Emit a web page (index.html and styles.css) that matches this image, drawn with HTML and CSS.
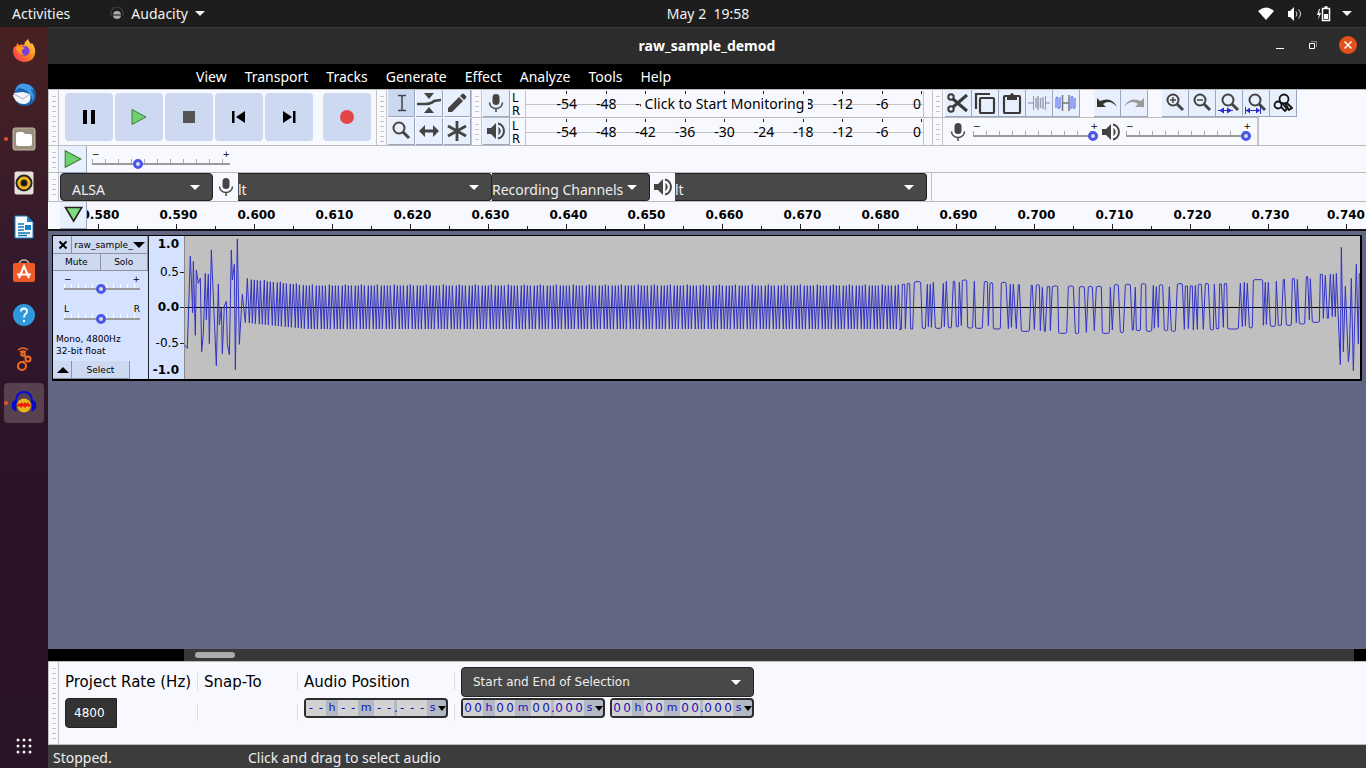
FILE: index.html
```
<!DOCTYPE html>
<html lang="en">
<head>
  <meta charset="UTF-8">
  <meta name="viewport" content="width=device-width, initial-scale=1.0">
  <title>raw_sample_demod</title>
  <link rel="stylesheet" href="styles.css">
</head>
<body>
  <svg class="defs" width="0" height="0" aria-hidden="true">
    <symbol id="mic" viewBox="0 0 20 20"><rect x="6.5" y="1" width="7" height="11" rx="3.5" fill="#444"/><path d="M3.5 9.5a6.5 6 0 0 0 13 0M10 15.5V19" fill="none" stroke="#444" stroke-width="1.5"/></symbol>
    <symbol id="speaker" viewBox="0 0 20 20"><path d="M1 7h4l5-5v16l-5-5H1z" fill="#444"/><path d="M12.500 6.500a4.500 4.500 0 0 1 0 7" fill="#444" stroke="#444"/><path d="M12 2.500a7.700 7.700 0 0 1 0 15" fill="none" stroke="#444" stroke-width="2"/></symbol>
    <symbol id="lens" viewBox="0 0 20 20"><circle cx="8" cy="7" r="5.500" fill="none" stroke="#444" stroke-width="2"/><path d="M12 11l6 6" stroke="#444" stroke-width="3"/></symbol>
    <symbol id="play" viewBox="0 0 16 18"><path d="M1 1.500L15 9 1 16.500z" fill="#6fd06f" stroke="#3b7d3b"/></symbol>
  </svg>

  <header class="topbar">
    <div class="topbar-left">
      <button>Activities</button>
      <button class="app-menu">
        <svg width="14" height="14" viewBox="0 0 14 14"><path d="M1 9V6a6 6 0 0 1 12 0v3" fill="none" stroke="#3a3a3a" stroke-width="1.500"/><circle cx="7" cy="8" r="4" fill="#aaa"/><path d="M3 8h8" stroke="#444" stroke-width="1.500"/></svg>
        Audacity <span class="caret"></span>
      </button>
    </div>
    <button class="clock">May 2&nbsp; 19:58</button>
    <div class="tray">
      <svg width="16" height="14" viewBox="0 0 16 14"><path d="M0 4Q8-3 16 4L8 13z" fill="#fff"/></svg>
      <svg width="16" height="14" viewBox="0 0 16 14"><path d="M1 4h2l4-4v14L3 10H1z" fill="#fff"/><path d="M9 4.500q2 2.500 0 5M11.500 2.500q4 4.500 0 9" fill="none" stroke="#ddd"/></svg>
      <svg width="16" height="16" viewBox="0 0 16 16"><path d="M3 3L1 9h2l-1 5 3-7H3l1-4z" fill="#fff"/><path d="M6.500 2.500h7v12h-7zM8.500 1h3" fill="none" stroke="#fff" stroke-width="1.500"/><path d="M8 8h4v5H8z" fill="#fff"/></svg>
      <span class="caret"></span>
    </div>
  </header>

  <div class="desktop">
    <nav class="dock">
      <a href="#" title="Firefox"><svg viewBox="0 0 24 24"><defs><linearGradient id="fx" x1="1" y1="0" x2="0" y2="1"><stop offset="0" stop-color="#ffec4a"/><stop offset=".45" stop-color="#ff8a1f"/><stop offset="1" stop-color="#f0255f"/></linearGradient></defs><path d="M5 4l2 2q3-1 5 0 1-4 4-6 1 3 3 5l1-1q4 5 3 11-2 8-11 8Q2 22 1 13 1 9 3 7l1 1z" fill="url(#fx)"/><circle cx="12.500" cy="12" r="5" fill="#7a3fd8"/><path d="M3 8q5-1 8 0l2 1-3 2q-1 4 3 5-4 1-7-3" fill="#ff9a22"/></svg></a>
      <a href="#" title="Thunderbird"><svg viewBox="0 0 24 24"><circle cx="13" cy="12" r="11" fill="#1c62ae"/><path d="M8 1q9-2 14 6l-4-1q5 5 3 12-3-12-14-13L3 8q1-5 5-7z" fill="#3f9be8"/><path d="M2 10l9-1 7 2q2 9-5 10-8 1-12-8z" fill="#f4f5fa"/><path d="M2 11l9 5 7-5" fill="none" stroke="#aab" stroke-width="1"/></svg></a>
      <a href="#" title="Files" class="running"><svg viewBox="0 0 24 24"><rect x="1" y="1" width="22" height="22" rx="2" fill="#9b917f" stroke="#c3b9a7"/><path d="M4 7q0-2 2-2h5l2 2h5q2 0 2 2v8q0 2-2 2H6q-2 0-2-2z" fill="#fff"/></svg></a>
      <a href="#" title="Rhythmbox"><svg viewBox="0 0 24 24"><rect x="2.500" y=".5" width="19" height="23" rx="2" fill="#e6e0d6"/><circle cx="12" cy="12" r="8.500" fill="#262626"/><circle cx="12" cy="12" r="5" fill="none" stroke="#f3b519" stroke-width="3"/><circle cx="12" cy="12" r="2" fill="#111"/></svg></a>
      <a href="#" title="LibreOffice Writer"><svg viewBox="0 0 24 24"><path d="M3 1h12l6 6v16H3z" fill="#f7fbff" stroke="#1382c4"/><path d="M15 1l6 6h-6z" fill="#1382c4"/><path d="M6 9h6M6 12h6M6 15h6M6 18h12M6 20.500h9" stroke="#1276b5" stroke-width="1.300"/><rect x="13" y="10" width="6" height="5" fill="#1382c4"/></svg></a>
      <a href="#" title="Ubuntu Software"><svg viewBox="0 0 24 24"><path d="M7 5q1-4 5-4t5 4" fill="none" stroke="#c9b9ab" stroke-width="1.500"/><rect x="1" y="4" width="22" height="19" rx="2" fill="#ee5a28"/><path d="M7 19l5-12 5 12M5 15.500h14" fill="none" stroke="#fff" stroke-width="2"/></svg></a>
      <a href="#" title="Help"><svg viewBox="0 0 24 24"><circle cx="12" cy="12" r="11" fill="#2f97dc"/><path d="M9 8.500q0-3 3-3t3 3q0 1.500-1.500 2.500T12 14.500" fill="none" stroke="#fff" stroke-width="1.800"/><circle cx="12" cy="18" r="1.200" fill="#fff"/></svg></a>
      <a href="#" title="Gqrx"><svg viewBox="0 0 24 24" fill="none" stroke="#f36b1c" stroke-width="2"><circle cx="10" cy="19" r="4"/><circle cx="16" cy="12" r="2.500"/><circle cx="11" cy="7" r="1.700"/><path d="M12 14l-1 2M14 10l-2-2"/><path d="M6 3q5-4 10 0M8 5q3-2 6 0" stroke-width="1.300"/></svg></a>
      <a href="#" title="Audacity" class="running active"><svg viewBox="0 0 24 24"><path d="M4 12V9q1-8 8-8t8 8v3" fill="none" stroke="#0707e0" stroke-width="2"/><ellipse cx="12" cy="14.500" rx="7" ry="7" fill="#e8b51c"/><path d="M5 14l2-2 1 1 2-2 1 2 2-2 1 2 2-2 1 2 2 1-2 2-2-1-2 2-2-2-2 2-2-2-2 1z" fill="#f21a10"/><path d="M4 9q-4 1-4 5.500T4 20q-1.500-5.500 0-11zM20 9q4 1 4 5.500T20 20q1.500-5.500 0-11z" fill="#0808cf" stroke="#0808cf"/></svg></a>
      <a href="#" title="Show Applications" class="apps"><svg viewBox="0 0 24 24" fill="none" stroke="#eee" stroke-width="3" stroke-linecap="round" stroke-dasharray="0 6"><path d="M6 6h13M6 12h13M6 18h13"/></svg></a>
    </nav>

    <main class="window">
      <div class="titlebar">
        <h1>raw_sample_demod</h1>
        <div class="window-buttons">
          <button aria-label="Minimize"><svg width="10" height="10" viewBox="0 0 10 10"><path d="M1 8.500h8" stroke="#fff"/></svg></button>
          <button aria-label="Restore"><svg width="10" height="10" viewBox="0 0 10 10" fill="none"><path d="M3 1.500h5.500V7" stroke="#888"/><path d="M1.500 3.500h5v5h-5z" stroke="#fff"/></svg></button>
          <button aria-label="Close" class="close"><svg width="10" height="10" viewBox="0 0 10 10"><path d="M1.500 1.500l7 7M8.500 1.500l-7 7" stroke="#fff" stroke-width="1.500"/></svg></button>
        </div>
      </div>

      <nav class="menubar">
        <button>View</button><button>Transport</button><button>Tracks</button><button>Generate</button><button>Effect</button><button>Analyze</button><button>Tools</button><button>Help</button>
      </nav>

      <section class="toolbars">
        <div class="toolbar transport">
          <span class="grip"></span>
          <button aria-label="Pause"><svg width="14" height="14" viewBox="0 0 14 14"><path d="M1 0h4v14H1zM9 0h4v14H9z"/></svg></button>
          <button aria-label="Play"><svg width="16" height="18"><use href="#play"/></svg></button>
          <button aria-label="Stop"><svg width="12" height="12"><rect width="12" height="12" fill="#555"/></svg></button>
          <button aria-label="Skip to Start"><svg width="14" height="12" viewBox="0 0 14 12"><path d="M0 0h2.500v12H0zM13 0v12L4 6z"/></svg></button>
          <button aria-label="Skip to End"><svg width="14" height="12" viewBox="0 0 14 12"><path d="M11 0h2.500v12H11zM1 0v12l9-6z"/></svg></button>
          <button aria-label="Record" class="record"><svg width="14" height="14"><circle cx="7" cy="7" r="7" fill="#e24646"/></svg></button>
        </div>

        <div class="toolbar tools">
          <span class="grip"></span>
          <div class="tool-grid">
            <button class="tool pressed" aria-label="Selection Tool"><svg viewBox="0 0 20 20" fill="none" stroke="#444" stroke-width="1.500"><path d="M7 2.500h3l1 1 1-1h3M7 17.500h3l1-1 1 1h3M11 3.500v13"/></svg></button>
            <button class="tool" aria-label="Envelope Tool"><svg class="wide" viewBox="0 0 24 20"><path d="M7 0h10l-5 6zM7 20h10l-5-6z" fill="#444"/><path d="M0 11h8q6 0 9-3l7-1" fill="none" stroke="#444" stroke-width="2.500"/></svg></button>
            <button class="tool" aria-label="Draw Tool"><svg viewBox="0 0 20 20"><path d="M1 19v-4L12 4l4 4L5 19zM13 3l2-2q1-1 2 0l2 2q1 1 0 2l-2 2z" fill="#444"/></svg></button>
            <button class="tool" aria-label="Zoom Tool"><svg><use href="#lens"/></svg></button>
            <button class="tool" aria-label="Time Shift Tool"><svg viewBox="0 0 20 20"><path d="M0 10l6-6v4.500h8V4l6 6-6 6v-4.500H6V16z" fill="#444"/></svg></button>
            <button class="tool" aria-label="Multi-Tool"><svg viewBox="0 0 20 20"><path d="M10 0v20M1 5l18 10M19 5L1 15" stroke="#444" stroke-width="2.800"/></svg></button>
          </div>
        </div>

        <div class="stack meters">
          <div class="toolbar">
            <span class="grip"></span>
            <button class="tool" aria-label="Record Meter"><svg><use href="#mic"/></svg></button>
            <div class="channels"><span>L</span><span>R</span></div>
            <div class="scale"><span>-54</span><span>-48</span><span>-42</span><span></span><span></span><span></span><span>-18</span><span>-12</span><span>-6</span><span class="zero">0</span>
              <button class="monitor">Click to Start Monitoring</button>
            </div>
          </div>
          <div class="toolbar">
            <span class="grip"></span>
            <button class="tool" aria-label="Playback Meter"><svg><use href="#speaker"/></svg></button>
            <div class="channels"><span>L</span><span>R</span></div>
            <div class="scale"><span>-54</span><span>-48</span><span>-42</span><span>-36</span><span>-30</span><span>-24</span><span>-18</span><span>-12</span><span>-6</span><span class="zero">0</span></div>
          </div>
        </div>

        <div class="stack side">
          <div class="toolbar edit">
            <span class="grip"></span>
            <button class="tool" aria-label="Cut"><svg class="big" viewBox="0 0 22 22" fill="none" stroke="#3a3a3a" stroke-width="2"><circle cx="4" cy="5" r="2.700"/><circle cx="4" cy="17" r="2.700"/><path d="M6 7l14 12M6 15L20 3" stroke-width="3"/></svg></button>
            <button class="tool" aria-label="Copy"><svg class="big" viewBox="0 0 22 22" fill="none" stroke="#3a3a3a" stroke-width="2.200"><path d="M2 17V2h14"/><rect x="6" y="6" width="14" height="15" rx="1"/></svg></button>
            <button class="tool" aria-label="Paste"><svg class="big" viewBox="0 0 22 22"><rect x="3" y="4" width="16" height="17" rx="1" fill="none" stroke="#3a3a3a" stroke-width="2.200"/><path d="M6 3h3q2-4 4 0h3v5H6z" fill="#3a3a3a"/></svg></button>
            <button class="tool" aria-label="Trim"><svg class="big" viewBox="0 0 22 22" fill="none"><path d="M0 11h5M18 11h4" stroke="#a0a6cf" stroke-width="1.500"/><path d="M5.500 4v14M17.500 4v14" stroke="#999"/><path d="M8 6v10M10 4v14M12.500 6v10M15 5v12" stroke="#989cae" stroke-width="1.500"/></svg></button>
            <button class="tool" aria-label="Silence"><svg class="big" viewBox="0 0 22 22" fill="none"><path d="M1 16V7q1-4 2 0v8q1 3 2 0V5M16 17V6q1-3 2 0v9q1 3 2 0V6" stroke="#7a8cf0" stroke-width="1.500"/><path d="M7.500 3v16M14 3v16M8 11h6" stroke="#777" stroke-width="1.500"/></svg></button>
            <span class="gap"></span>
            <button class="tool" aria-label="Undo"><svg class="big" viewBox="0 0 22 22"><path d="M1 6v9h9l-3-3q7-5 14 3Q16 4 4 9z" fill="#333"/></svg></button>
            <button class="tool" aria-label="Redo"><svg class="big" viewBox="0 0 22 22"><path d="M21 6v9h-9l3-3q-7-5-14 3Q6 4 18 9z" fill="#999"/></svg></button>
            <span class="gap"></span>
            <button class="tool" aria-label="Zoom In"><svg><use href="#lens"/><path d="M5 7h6M8 4v6" stroke="#444" stroke-width="1.500"/></svg></button>
            <button class="tool" aria-label="Zoom Out"><svg><use href="#lens"/><path d="M5 7h6" stroke="#444" stroke-width="1.500"/></svg></button>
            <button class="tool" aria-label="Fit Selection"><svg class="big" viewBox="0 0 22 22"><use href="#lens" x="2" y="1" width="20" height="20"/><path d="M0 18.500h15" stroke="#2b2bc9"/><path d="M1 18.500l5-3v6zM14 18.500l-5-3v6z" fill="#2b2bc9"/></svg></button>
            <button class="tool" aria-label="Fit Project"><svg class="big" viewBox="0 0 22 22"><use href="#lens" x="2" y="1" width="20" height="20"/><path d="M.5 15v7M15.500 15v7M1 18.500h14" stroke="#2b2bc9"/><path d="M1 18.500l4-3v6zM15 18.500l-4-3v6z" fill="#2b2bc9"/></svg></button>
            <button class="tool" aria-label="Zoom Toggle"><svg viewBox="0 0 20 20" fill="none" stroke="#111" stroke-width="1.800"><circle cx="11" cy="6" r="4.500"/><path d="M14 10l5 5-3 2-4-7"/><circle cx="5" cy="12" r="3.500"/><path d="M8 14l4 4 2-2-5-6"/></svg></button>
          </div>
          <div class="toolbar mixer">
            <span class="grip"></span>
            <svg width="20" height="20"><use href="#mic"/></svg>
            <label class="slider"><span class="ends"><span>−</span><span>+</span></span><input type="range" value="100" aria-label="Recording volume"></label>
            <svg width="20" height="20"><use href="#speaker"/></svg>
            <label class="slider"><span class="ends"><span>−</span><span>+</span></span><input type="range" value="100" aria-label="Playback volume"></label>
          </div>
        </div>
      </section>

      <section class="toolbar speed">
        <span class="grip"></span>
        <button class="tool" aria-label="Play at Speed"><svg width="16" height="18"><use href="#play"/></svg></button>
        <label class="slider"><span class="ends"><span>−</span><span>+</span></span><input type="range" value="32" aria-label="Playback speed"></label>
      </section>

      <section class="toolbar devices">
        <span class="grip"></span>
        <div class="drop host"><select aria-label="Audio host"><option>ALSA</option></select></div>
        <svg width="20" height="20"><use href="#mic"/></svg>
        <div class="drop cut input"><select aria-label="Recording device"><option>lt</option></select></div>
        <div class="drop cut count"><select aria-label="Recording channels"><option>Recording Channels</option></select></div>
        <svg width="20" height="20"><use href="#speaker"/></svg>
        <div class="drop cut output"><select aria-label="Playback device"><option>lt</option></select></div>
        <span class="toolbar-end"></span>
      </section>

      <section class="timeline">
        <button class="tool" aria-label="Pinned play head"><svg width="16" height="16" viewBox="0 0 16 16"><path d="M2 2h13L8.500 13z" fill="#7fdc7f" stroke="#222" stroke-width="1.300"/></svg></button>
        <div class="ruler"><div class="ruler-labels" id="ruler"></div></div>
      </section>

      <section class="tracks">
        <article class="track">
          <div class="panel">
            <div class="panel-row"><button class="small" aria-label="Close track"><svg width="10" height="10" viewBox="0 0 10 10"><path d="M1.500 1.500l7 7M8.500 1.500l-7 7" stroke="#000" stroke-width="2"/></svg></button><button class="name">raw_sample_<span class="down"></span></button></div>
            <div class="panel-row halves"><button>Mute</button><button>Solo</button></div>
            <label class="slider"><span class="ends"><span>−</span><span>+</span></span><input type="range" value="49" aria-label="Gain"></label>
            <label class="slider"><span class="ends"><span>L</span><span>R</span></span><input type="range" value="49" aria-label="Pan"></label>
            <p>Mono, 4800Hz<br>32-bit float</p>
            <div class="panel-row bottom"><button class="small" aria-label="Collapse"><span class="up"></span></button><button class="select">Select</button></div>
          </div>
          <div class="levels"><b>1.0</b><span>0.5</span><b>0.0</b><span>-0.5</span><b>-1.0</b></div>
          <svg class="wave" viewBox="0 0 3525 429" preserveAspectRatio="none"><path class="axis" d="M0 214.500H3525"/><path class="samples" id="samples"/></svg>
        </article>
      </section>

      <div class="scrollbar"><div class="scroll-track"><div class="scroll-thumb"></div></div></div>

      <section class="toolbar selection">
        <span class="grip"></span>
        <div class="field rate"><label for="rate">Project Rate (Hz)</label><input id="rate" type="text" value="4800"></div>
        <div class="field snap"><span>Snap-To</span></div>
        <div class="field position"><span>Audio Position</span><div class="time" data-value="-- h -- m --.--- s"></div></div>
        <div class="range">
          <div class="drop"><select aria-label="Selection mode"><option>Start and End of Selection</option></select></div>
          <div class="times"><div class="time" data-value="00 h 00 m 00.000 s"></div><div class="time" data-value="00 h 00 m 00.000 s"></div></div>
        </div>
      </section>

      <footer class="status"><span>Stopped.</span><span>Click and drag to select audio</span></footer>
    </main>
  </div>

  <script src="app.js"></script>
</body>
</html>
```
FILE: styles.css
```
* { box-sizing: border-box; }

body {
  margin: 0;
  height: 100vh;
  display: flex;
  flex-direction: column;
  overflow: hidden;
  font-family: "Noto Sans", "Open Sans", sans-serif;
  font-size: 14px;
  color: #000;
}

button, input, select { font: inherit; color: inherit; }
button { border: 0; padding: 0; background: none; }
svg { display: block; flex: none; }
.defs { position: absolute; }

/* gnome top bar */
.topbar {
  height: 27px;
  flex: none;
  display: grid;
  grid-template-columns: 1fr auto 1fr;
  align-items: center;
  background: #1d1d1d;
  color: #f2f2f2;
  padding: 0 14px 0 12px;
}
.topbar-left, .tray, .app-menu { display: flex; align-items: center; }
.topbar-left { gap: 40px; }
.app-menu { gap: 7px; }
.clock { margin-left: 52px; }
.tray { justify-content: flex-end; gap: 13px; }
.tray .caret { margin-left: -3px; }
.caret {
  border: 5px solid transparent;
  border-top-color: #f2f2f2;
  border-bottom: 0;
}

.desktop { flex: 1; display: flex; min-height: 0; }

.dock {
  width: 48px;
  flex: none;
  display: flex;
  flex-direction: column;
  align-items: center;
  gap: 4px;
  padding: 4px 0 2px;
  background: linear-gradient(#482222, #35192d 30%, #2c1328 60%, #291327);
}
.dock a {
  width: 40px;
  height: 40px;
  display: flex;
  align-items: center;
  justify-content: center;
  border-radius: 4px;
  position: relative;
}
.dock svg { width: 24px; height: 24px; }
.dock .active { background: #57414f; }
.dock .apps { margin-top: auto; }
.dock .running::before {
  content: "";
  position: absolute;
  left: 0;
  width: 4px;
  height: 4px;
  border-radius: 2px;
  background: #e95420;
}

.window {
  flex: 1;
  min-width: 0;
  display: flex;
  flex-direction: column;
  background: #f8f9ff;
}

.titlebar {
  height: 37px;
  flex: none;
  display: grid;
  grid-template-columns: 1fr auto 1fr;
  align-items: center;
  background: #2c2c2c;
  border-top: 1px solid #383838;
  color: #fff;
  padding-bottom: 2px;
}
.titlebar h1 { grid-column: 2; margin: 0; font-size: 14px; }
.window-buttons { display: flex; justify-content: flex-end; align-items: center; gap: 23px; padding-right: 9px; }
.close {
  width: 18px;
  height: 18px;
  border-radius: 9px;
  background: #e3501b;
  display: flex;
  align-items: center;
  justify-content: center;
  margin-left: -2px;
}

.menubar {
  height: 25px;
  flex: none;
  display: flex;
  gap: 18px;
  padding-left: 148px;
  background: #000;
  color: #fff;
}

/* toolbars */
.toolbars {
  display: flex;
  height: 57px;
  flex: none;
  border-top: 1px solid #bbb;
  border-bottom: 1px solid #bbb;
}
.toolbar { display: flex; align-items: center; }
.stack { display: flex; flex-direction: column; }
.stack .toolbar { height: 28px; }
.stack .toolbar + .toolbar { border-top: 1px solid #bbb; }
.grip {
  width: 11px;
  flex: none;
  align-self: stretch;
  border: solid #c4c4c4;
  border-width: 0 1px;
  background: repeating-linear-gradient(#f8f9ff 0 4px, #c4c4c4 4px 5px) content-box;
  padding: 2px 2px 2px 3px;
}

.transport { width: 328px; gap: 2px; }
.transport .grip { margin-right: 4px; }
.transport button {
  width: 48px;
  height: 48px;
  margin-bottom: 1px;
  border-radius: 4px;
  background: #cdd9f1;
  display: flex;
  align-items: center;
  justify-content: center;
}
.transport .record { margin-left: 8px; }

.tool {
  width: 27px;
  height: 27px;
  flex: none;
  display: flex;
  align-items: center;
  justify-content: center;
  background: #e9f0fd;
  border: solid #9aa5be;
  border-width: 0 1px 1px 0;
}
.tool svg { width: 20px; height: 20px; }
.tool svg.wide { width: 24px; }
.tool svg.big { width: 22px; height: 22px; }
.tool.pressed { background: #cbd8f1; }
.tools { width: 95px; }
.tool-grid {
  display: grid;
  grid-template-columns: repeat(3, 27px);
  grid-template-rows: 28px 27px;
  margin-left: 1px;
  gap: 0 1px;
}

.meters { width: 461px; }
.meters .grip { margin-right: 1px; }
.channels {
  width: 12px;
  margin-left: 2px;
  display: flex;
  flex-direction: column;
  font: 13px/13px "DejaVu Sans Condensed", "DejaVu Sans", sans-serif;
}
.scale {
  flex: 1;
  height: 26px;
  margin: 0 8px 0 1px;
  padding-left: 21px;
  display: flex;
  align-items: center;
  position: relative;
  border: solid #c4c4c4;
  border-width: 0 1px;
  background: linear-gradient(#c4c4c4, #c4c4c4) 0 13px / 100% 1px no-repeat;
}
.scale span {
  flex: 1 1 0;
  height: 26px;
  line-height: 26px;
  text-align: center;
  background: linear-gradient(#222, #222) 50% 0 / 1px 3px no-repeat;
}
.scale .zero {
  flex: 0 0 21px;
  text-align: right;
  padding-right: 2px;
  background-position: 19px 0;
}
.monitor {
  position: absolute;
  left: 115px;
  top: 3px;
  width: 167px;
  height: 20px;
  line-height: 20px;
  background: #f8f9ff;
  white-space: nowrap;
}

.side { flex: 1; }
.edit .grip { margin-right: 2px; }
.gap { width: 14px; }
.mixer { width: 327px; border-right: 2px solid #c4c4c4; padding-right: 6px; gap: 5px; }
.mixer .slider { flex: 1; }
.mixer .slider + svg { margin-left: -2px; }

.slider { display: flex; flex-direction: column; position: relative; }
.ends {
  display: flex;
  justify-content: space-between;
  font: 9px/8px "DejaVu Sans", sans-serif;
}
.slider input {
  appearance: none;
  width: 100%;
  height: 12px;
  margin: -1px 0 0;
  background:
    linear-gradient(#9b9b9b, #9b9b9b) 0 6px / 100% 2px no-repeat,
    repeating-linear-gradient(90deg, #aaa 0 1px, transparent 1px 13px) 0 2px / 100% 4px no-repeat;
}
.slider input::-webkit-slider-thumb {
  appearance: none;
  width: 10px;
  height: 10px;
  margin-top: 2px;
  border: 3px solid #4a55ea;
  border-radius: 5px;
  background: #ddd;
}

.speed { height: 27px; flex: none; border-bottom: 1px solid #bbb; }
.speed .grip { margin-right: 1px; }
.speed .slider { width: 138px; margin-left: 5px; }

.devices { height: 29px; flex: none; border-bottom: 1px solid #bbb; }
.devices .grip { margin-right: 1px; }
.devices > svg { margin: 0 2px 0 3px; }
.drop { position: relative; }
.drop select {
  appearance: none;
  width: 100%;
  height: 28px;
  padding: 4px 11px 0;
  border: 1px solid #222;
  border-radius: 4px;
  background: #484848;
  color: #eee;
}
.drop::after {
  content: "";
  position: absolute;
  right: 13px;
  top: 12px;
  border: 5px solid transparent;
  border-top-color: #fff;
  border-bottom: 0;
  pointer-events: none;
}
.host { width: 153px; }
.cut select { border-radius: 0 4px 4px 0; padding-left: 0; border-left: 0; }
.input { width: 254px; }
.count { width: 158px; }
.output { width: 252px; }
.toolbar-end { align-self: stretch; width: 5px; border-right: 1px solid #c4c4c4; }

/* time ruler */
.timeline { height: 29px; flex: none; display: flex; padding-left: 12px; border-bottom: 2px solid #111; }
.ruler { flex: 1; overflow: hidden; }
.ruler-labels { display: flex; margin-left: -28px; }
.ruler-labels span {
  flex: 0 0 78px;
  height: 27px;
  padding-left: 5px;
  text-align: center;
  font: bold 12px/27px "DejaVu Sans", sans-serif;
  background:
    linear-gradient(#222, #222) 39px 100% / 1px 5px no-repeat,
    linear-gradient(#222, #222) 0 100% / 1px 3px no-repeat;
}
.ruler-labels span:last-child { padding-left: 0; }

/* tracks */
.tracks { flex: 1; min-height: 0; background: #636784; padding: 4px 4px 0; }
.track {
  display: flex;
  height: 146px;
  border: 1px solid #000;
  border-width: 1px 2px 2px 1px;
  background: #c0c0c0;
}
.panel {
  width: 96px;
  flex: none;
  display: flex;
  flex-direction: column;
  background: #d4e1ff;
  border-right: 1px solid #222;
  font: 9px/12px "DejaVu Sans", sans-serif;
}
.panel-row { display: flex; height: 18px; flex: none; }
.panel button {
  background: #cdd9f1;
  border: solid #8c92a0;
  border-width: 0 1px 1px 0;
  display: flex;
  align-items: center;
  justify-content: center;
}
.panel .small { width: 19px; padding-left: 1px; }
.panel .name { flex: 1; }
.down { border: 6px solid transparent; border-bottom: 0; border-top-color: #000; }
.up { border: 6px solid transparent; border-top: 0; border-bottom-color: #000; }
.panel .halves { height: 17px; }
.halves button { flex: 1; }
.panel .slider { margin: 4px 8px 0 11px; height: 26px; }
.panel .slider input {
  background:
    linear-gradient(#9b9b9b, #9b9b9b) 0 6px / 100% 2px no-repeat,
    repeating-linear-gradient(90deg, #fff 0 1px, transparent 1px 7px) 0 2px / 100% 4px no-repeat;
}
.panel p { margin: 2px 3px 0; }
.panel .bottom { margin-top: auto; }
.panel .select { width: 58px; }
.levels {
  width: 36px;
  flex: none;
  display: flex;
  flex-direction: column;
  align-items: flex-end;
  padding-right: 5px;
  background:
    linear-gradient(#222, #222) 100% 36px / 4px 1px no-repeat,
    linear-gradient(#222, #222) 100% 71px / 4px 1px no-repeat,
    linear-gradient(#222, #222) 100% 107px / 4px 1px no-repeat,
    #d4e1ff;
  border-right: 1px solid #888;
  font: 12px/17px "DejaVu Sans", sans-serif;
}
.levels :nth-child(2) { margin: 11px 0 18px; }
.levels :nth-child(4) { margin: 19px 0 10px; }
.wave { flex: 1; min-width: 0; height: 143px; }
.wave path { fill: none; vector-effect: non-scaling-stroke; }
.axis { stroke: #000; }
.samples { stroke: #3232c8; }

.scrollbar { height: 12px; flex: none; background: #000; padding: 0 12px 0 136px; }
.scroll-track { height: 12px; background: #383838; padding: 3px 11px; }
.scroll-thumb { width: 40px; height: 6px; border-radius: 3px; background: #aaa; }

/* selection bar */
.selection {
  height: 84px;
  flex: none;
  align-items: stretch;
  border-top: 1px solid #bbb;
  border-bottom: 1px solid #bbb;
  font-family: "DejaVu Sans", sans-serif;
  font-size: 15px;
}
.field {
  display: flex;
  flex-direction: column;
  align-items: flex-start;
  gap: 7px;
  padding: 11px 6px 0;
  white-space: nowrap;
  background:
    linear-gradient(#ddd, #ddd) 100% 11px / 1px 17px no-repeat,
    linear-gradient(#ddd, #ddd) 100% 42px / 1px 17px no-repeat;
}
.field > :first-child { line-height: 18px; }
.rate { width: 139px; }
.snap { width: 100px; }
.position { width: 157px; }
.rate input {
  width: 52px;
  height: 30px;
  border: 1px solid #222;
  border-radius: 4px 0 0 4px;
  background: #333;
  color: #fff;
  padding: 0 8px;
  font-size: 12px;
}
.range { padding: 5px 6px; display: flex; flex-direction: column; gap: 1px; }
.range select { height: 30px; font-size: 12px; padding-top: 0; }
.range .drop::after { top: 13px; }
.times { display: flex; gap: 5px; }
.time {
  width: 144px;
  height: 20px;
  display: flex;
  align-items: stretch;
  border: 2px solid #2b2b2b;
  border-radius: 4px;
  background: #b3b9c4;
  color: #1414b8;
  font-size: 12px;
  line-height: 16px;
}
.digit { width: 10px; text-align: center; background: #d2d2d2; }
.unit { flex: 1 1 auto; text-align: center; font-size: 11px; }
.dot { width: 3px; }
.time .down { border-width: 5px 4px 0; align-self: center; }

.status {
  height: 23px;
  flex: none;
  display: flex;
  align-items: center;
  padding-top: 2px;
  background: #3c3c3c;
  color: #eee;
}
.status span:first-child { width: 200px; padding-left: 5px; }
```
FILE: app.js
```
// ruler labels, one every 10 ms
const ruler = document.getElementById("ruler");
for (let ms = 580; ms <= 740; ms += 10) {
  const label = document.createElement("span");
  label.textContent = (ms / 1000).toFixed(3);
  ruler.appendChild(label);
}

// time fields: digits get a light cell, units a dark one
document.querySelectorAll(".time").forEach(field => {
  for (const ch of field.dataset.value.replaceAll(" ", "")) {
    const cell = document.createElement("span");
    cell.textContent = ch;
    cell.className = ch === "." ? "dot" : /[hms]/.test(ch) ? "unit" : "digit";
    field.appendChild(cell);
  }
  const arrow = document.createElement("span");
  arrow.className = "down";
  field.appendChild(arrow);
});

const points = [];

// noise before the signal starts
const noise = [
  0,327, 7,337, 16,60, 23,230, 25,76, 31,298, 34,102, 40,142, 46,127, 50,347, 55,292,
  61,112, 64,251, 70,115, 73,323, 79,42, 94,389, 100,144, 103,266, 109,215, 112,353,
  118,210, 124,196, 127,322, 133,356, 139,42, 142,132, 148,85, 151,401, 157,9,
  163,325, 172,175, 181,260
];
for (let i = 0; i < noise.length; i += 2) points.push([noise[i], noise[i + 1]]);

// steady carrier, snapped to whole columns
const snap = x => Math.round(x / 3) * 3 + 1;
for (let x = 187, n = 0; x < 2140; x += 9.76, n++) {
  const decay = Math.max(0, 1 - n / 18);
  points.push([snap(x), 149 - 19 * decay + (n % 5 === 0 ? -3 : 0)]);
  points.push([snap(x + 4.88), 279 - 18 * decay]);
}

// demodulated bits: start, end, level
const bits = [
  2143,2149,280, 2152,2159,145, 2161,2161,278, 2167,2174,143, 2177,2183,279, 2188,2207,139, 2212,2221,276,
  2227,2227,145, 2230,2230,272, 2236,2236,145, 2239,2239,274, 2245,2245,139, 2251,2269,275, 2275,2275,142,
  2278,2278,272, 2284,2284,136, 2290,2299,274, 2305,2309,136, 2314,2320,272, 2323,2323,139, 2329,2329,269,
  2332,2345,134, 2348,2363,274, 2368,2368,136, 2372,2392,275, 2398,2407,138, 2410,2410,269, 2415,2423,142,
  2425,2446,277, 2449,2463,141, 2470,2470,278, 2476,2476,145, 2479,2479,274, 2485,2485,145, 2494,2494,278,
  2500,2503,146, 2509,2533,284, 2539,2542,148, 2548,2548,280, 2554,2563,148, 2566,2566,284, 2572,2572,154,
  2578,2581,286, 2587,2594,152, 2596,2596,284, 2602,2618,152, 2621,2645,290, 2650,2665,152, 2671,2681,291,
  2683,2698,154, 2704,2704,289, 2710,2722,153, 2728,2728,284, 2734,2749,153, 2752,2773,290, 2776,2776,154,
  2782,2782,282, 2788,2800,148, 2806,2815,288, 2821,2836,147, 2842,2845,282, 2851,2851,154, 2854,2866,282,
  2869,2882,145, 2884,2900,284, 2905,2905,148, 2908,2908,277, 2914,2914,152, 2920,2920,274, 2923,2933,148,
  2938,2948,282, 2953,2953,152, 2959,2971,284, 2977,2992,145, 2998,2998,280, 3001,3007,150, 3010,3010,278,
  3016,3022,150, 3025,3025,282, 3031,3031,148, 3037,3037,280, 3040,3049,146, 3055,3055,280, 3061,3070,144,
  3076,3085,280, 3088,3088,145, 3094,3101,278, 3104,3109,144, 3115,3115,274, 3118,3125,143, 3128,3160,277,
  3166,3166,142, 3172,3172,272, 3178,3178,139, 3181,3181,269, 3187,3187,142, 3193,3202,274, 3205,3233,133,
  3235,3235,268, 3241,3241,139, 3244,3244,265, 3250,3250,139, 3256,3271,269, 3274,3274,136, 3280,3289,267,
  3295,3298,130, 3304,3319,266, 3322,3328,128, 3334,3334,260, 3337,3337,130, 3343,3359,262, 3364,3368,122,
  3373,3373,251, 3376,3376,128, 3382,3403,257, 3406,3412,115, 3415,3415,247, 3421,3421,118, 3427,3430,247,
  3436,3436,115, 3442,3442,242, 3445,3445,115, 3451,3451,242, 3454,3454,112
];
for (let i = 0; i < bits.length; i += 3) {
  const [start, end, y] = bits.slice(i, i + 3);
  points.push([start, y]);
  if (end - start > 7) {
    const bend = y > 214 ? 2 : -2;
    points.push([start + 5, y + bend], [end - 4, y + bend]);
  }
  if (end > start) points.push([end, y]);
}

// burst at the end
points.push([3466, 386], [3469, 34], [3475, 347], [3481, 151], [3490, 377], [3493, 352],
  [3499, 127], [3505, 404], [3514, 85], [3520, 323], [3523, 112]);

document.getElementById("samples").setAttribute("d", "M" + points.map(p => p.join(" ")).join("L"));
```
